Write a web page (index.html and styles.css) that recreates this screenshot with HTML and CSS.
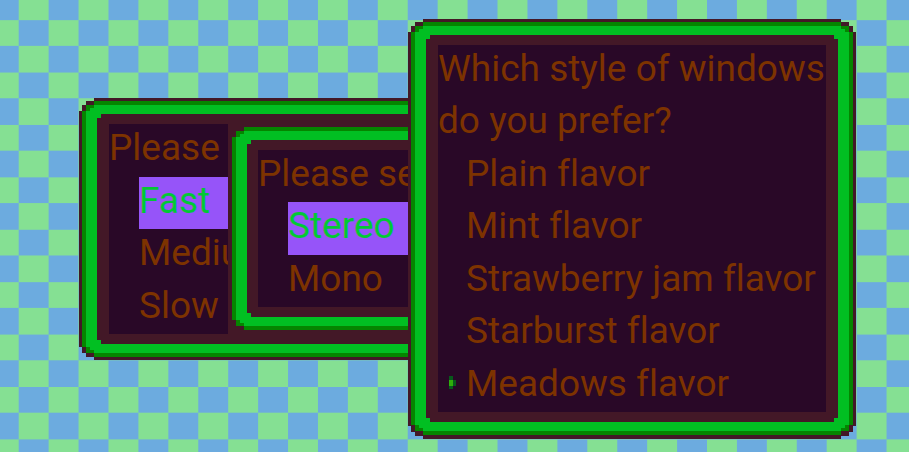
FILE: index.html
```html
<!DOCTYPE html>
<html lang="en">
<head>
<meta charset="utf-8">
<title>Window flavor</title>
<link rel="stylesheet" href="styles.css">
</head>
<body>
<main class="desktop">
  <svg class="checker" viewBox="0 0 243 138" preserveAspectRatio="none" shape-rendering="crispEdges" aria-hidden="true">
    <defs>
      <pattern id="tiles" x="-3" y="-2" width="16" height="16" patternUnits="userSpaceOnUse">
        <rect width="16" height="16" fill="#6cabdf"/>
        <rect x="8" width="8" height="8" fill="#85e093"/>
        <rect y="8" width="8" height="8" fill="#85e093"/>
      </pattern>
    </defs>
    <rect width="243" height="138" fill="url(#tiles)"/>
  </svg>

  <section class="window speed">
    <div class="edge"><div class="rim"><div class="inner"><div class="panel">
      <p class="row">Please s</p>
      <button class="row option selected">Fast</button>
      <button class="row option">Mediu</button>
      <button class="row option">Slow</button>
    </div></div></div></div>
  </section>

  <section class="window sound">
    <div class="edge"><div class="rim"><div class="inner"><div class="panel">
      <p class="row">Please se</p>
      <button class="row option selected">Stereo</button>
      <button class="row option">Mono</button>
    </div></div></div></div>
  </section>

  <section class="window flavor">
    <div class="edge"><div class="rim"><div class="inner"><div class="panel">
      <p class="row">Which style of windows</p>
      <p class="row">do you prefer?</p>
      <button class="row option">Plain flavor</button>
      <button class="row option">Mint flavor</button>
      <button class="row option">Strawberry jam flavor</button>
      <button class="row option">Starburst flavor</button>
      <button class="row option current">
        <svg class="cursor" viewBox="0 0 7 13" shape-rendering="crispEdges" aria-hidden="true">
          <path fill="#075a1b" d="M0 0h4v4h3v6H4v3H0z"/>
          <path fill="#2fae0b" d="M0 4h4v6H0z"/>
        </svg>Meadows flavor</button>
    </div></div></div></div>
  </section>
</main>
</body>
</html>
```

FILE: styles.css
```css
* {
  box-sizing: border-box;
}

body {
  margin: 0;
  font-family: Roboto, "Liberation Sans", sans-serif;
  font-size: 37px;
  font-variant-ligatures: none;
  color: #7d3300;
}

.desktop {
  position: relative;
  height: 100vh;
  overflow: hidden;
}

.checker {
  display: block;
  width: 100%;
  height: 100%;
}

/* Window frames: four nested layers with stepped corners */
.window {
  position: absolute;
  display: grid;
  padding: 3px;
  background: #431827;
  clip-path: polygon(
    0 13px, 3px 13px, 3px 7px, 7px 7px, 7px 3px, 15px 3px, 15px 0,
    calc(100% - 15px) 0, calc(100% - 15px) 3px, calc(100% - 7px) 3px, calc(100% - 7px) 7px, calc(100% - 3px) 7px, calc(100% - 3px) 13px, 100% 13px,
    100% calc(100% - 13px), calc(100% - 3px) calc(100% - 13px), calc(100% - 3px) calc(100% - 7px), calc(100% - 7px) calc(100% - 7px), calc(100% - 7px) calc(100% - 3px), calc(100% - 15px) calc(100% - 3px), calc(100% - 15px) 100%,
    15px 100%, 15px calc(100% - 3px), 7px calc(100% - 3px), 7px calc(100% - 7px), 3px calc(100% - 7px), 3px calc(100% - 13px), 0 calc(100% - 13px));
}

.edge {
  display: grid;
  padding: 4px;
  background: #058500;
  clip-path: polygon(
    0 10px, 4px 10px, 4px 4px, 12px 4px, 12px 0,
    calc(100% - 12px) 0, calc(100% - 12px) 4px, calc(100% - 4px) 4px, calc(100% - 4px) 10px, 100% 10px,
    100% calc(100% - 10px), calc(100% - 4px) calc(100% - 10px), calc(100% - 4px) calc(100% - 4px), calc(100% - 12px) calc(100% - 4px), calc(100% - 12px) 100%,
    12px 100%, 12px calc(100% - 4px), 4px calc(100% - 4px), 4px calc(100% - 10px), 0 calc(100% - 10px));
}

.rim {
  display: grid;
  padding: 9px 11px;
  background: #01bf22;
  clip-path: polygon(
    0 6px, 4px 6px, 4px 3px, 8px 3px, 8px 0,
    calc(100% - 8px) 0, calc(100% - 8px) 3px, calc(100% - 4px) 3px, calc(100% - 4px) 6px, 100% 6px,
    100% calc(100% - 6px), calc(100% - 4px) calc(100% - 6px), calc(100% - 4px) calc(100% - 3px), calc(100% - 8px) calc(100% - 3px), calc(100% - 8px) 100%,
    8px 100%, 8px calc(100% - 3px), 4px calc(100% - 3px), 4px calc(100% - 6px), 0 calc(100% - 6px));
}

.inner {
  display: grid;
  padding: 10px 12px;
  background: #431827;
  clip-path: polygon(
    0 4px, 4px 4px, 4px 0,
    calc(100% - 4px) 0, calc(100% - 4px) 4px, 100% 4px,
    100% calc(100% - 4px), calc(100% - 4px) calc(100% - 4px), calc(100% - 4px) 100%,
    4px 100%, 4px calc(100% - 4px), 0 calc(100% - 4px));
}

.panel {
  display: grid;
  grid-auto-rows: 1fr;
  min-width: 0;
  overflow: hidden;
  background: #290827;
}

.speed {
  left: 79px;
  top: 98px;
  width: 400px;
  min-height: 262px;
}

.sound {
  left: 228px;
  top: 124px;
  width: 300px;
  min-height: 210px;
  padding: 3px 3px 4px 4px;
  clip-path: none;
}

.sound .inner {
  padding-left: 11px;
}

.flavor {
  left: 408px;
  top: 19px;
  width: 448px;
  min-height: 420px;
  padding-bottom: 4px;
}

.row {
  min-width: 0;
  margin: 0;
  padding: 0 0 4px;
  line-height: 48px;
  white-space: nowrap;
}

.option {
  position: relative;
  margin-left: 30px;
  border: 0;
  background: none;
  color: inherit;
  font: inherit;
  line-height: 48px;
  text-align: left;
}

.selected {
  background: #9654f9;
  color: #02c835;
}

.flavor .option {
  margin-left: 28px;
}

.flavor .current {
  margin-left: 0;
  padding-left: 28px;
}

.cursor {
  position: absolute;
  left: 11px;
  top: 16px;
  width: 7px;
  height: 13px;
}
```
